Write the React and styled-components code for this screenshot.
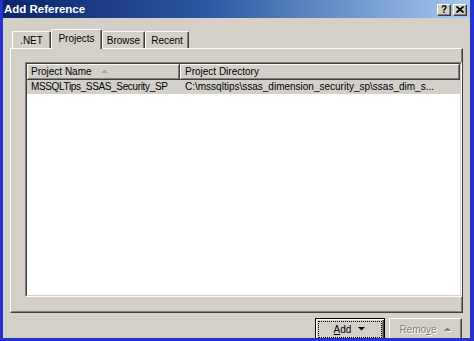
import React from "react";
import styled, { createGlobalStyle } from "styled-components";

const Global = createGlobalStyle`
  html, body { margin: 0; padding: 0; background: #ffffff; }
  * { box-sizing: border-box; }
`;

const Window = styled.div`
  width: 474px;
  height: 341px;
  border-style: solid;
  border-color: #2433cc;
  border-width: 0 4px 3px 3px;
  background: #d4d0c8;
  overflow: hidden;
  display: flex;
  flex-direction: column;
  font-family: "Liberation Sans", Arial, sans-serif;
  font-size: 10px;
  color: #000;
`;

const TitleBar = styled.div`
  flex: none;
  height: 18px;
  display: flex;
  align-items: center;
  justify-content: space-between;
  padding: 0 3px 0 1px;
  background: linear-gradient(to right, #0a246a 0%, #2f5aa4 45%, #a6caf0 100%);
  color: #fff;
  font-weight: bold;
  font-size: 11.5px;
`;

const CaptionButtons = styled.div`
  display: flex;
  gap: 2px;
  padding-top: 1px;
`;

const CaptionButton = styled.div`
  width: 14px;
  height: 12px;
  display: flex;
  align-items: center;
  justify-content: center;
  background: #d4d0c8;
  border: 1px solid;
  border-color: #fff #404040 #404040 #fff;
  box-shadow: inset -1px -1px #808080;
  color: #000;
  font-weight: bold;
  font-size: 10px;
  line-height: 1;
`;

const Body = styled.div`
  flex: 1;
  display: flex;
  flex-direction: column;
  padding: 11px 7px 0;
  min-height: 0;
`;

const TabStrip = styled.div`
  flex: none;
  height: 19px;
  display: flex;
  align-items: flex-end;
  padding-left: 2px;
  position: relative;
  z-index: 1;
`;

const Tab = styled.div`
  width: ${(p) => p.$width}px;
  height: ${(p) => (p.$active ? 20 : 17)}px;
  margin-bottom: ${(p) => (p.$active ? -1 : 0)}px;
  padding-bottom: ${(p) => (p.$active ? 2 : 0)}px;
  display: flex;
  align-items: center;
  justify-content: center;
  background: #d4d0c8;
  border-top: 1px solid #fff;
  border-left: 1px solid #fff;
  border-right: 1px solid #404040;
  border-radius: 2px 2px 0 0;
  box-shadow: inset -1px 0 #808080;
  white-space: nowrap;
`;

const Panel = styled.div`
  flex: none;
  height: 265px;
  display: flex;
  padding: 13px 15px 15px 14px;
  border-top: 1px solid #fff;
  border-left: 1px solid #fff;
  border-right: 1px solid #404040;
  border-bottom: 1px solid #404040;
  box-shadow: inset -1px -1px #808080;
`;

const ListOuter = styled.div`
  flex: 1;
  display: flex;
  border: 1px solid;
  border-color: #808080 #fff #fff #808080;
`;

const ListInner = styled.div`
  flex: 1;
  display: flex;
  flex-direction: column;
  background: #fff;
  border: 1px solid;
  border-color: #404040 #d4d0c8 #d4d0c8 #404040;
  overflow: hidden;
`;

const HeaderRow = styled.div`
  flex: none;
  display: flex;
  height: 16px;
`;

const HeaderCell = styled.div`
  width: ${(p) => p.$width}px;
  flex: none;
  display: flex;
  align-items: center;
  gap: 9px;
  padding-left: ${(p) => p.$pad}px;
  background: #d4d0c8;
  border-right: 1px solid #404040;
  border-bottom: 1px solid #404040;
  box-shadow: inset 1px 1px #fff, inset -1px -1px #808080;
  white-space: nowrap;
  overflow: hidden;
`;

const Row = styled.div`
  flex: none;
  display: flex;
  height: 14px;
  background: ${(p) => (p.$selected ? "#d3d0ca" : "transparent")};
`;

const Cell = styled.div`
  width: ${(p) => p.$width}px;
  flex: none;
  padding-left: ${(p) => p.$pad}px;
  line-height: 14px;
  white-space: nowrap;
  overflow: hidden;
  letter-spacing: ${(p) => p.$tight || 0}px;
`;

const ButtonRow = styled.div`
  flex: none;
  display: flex;
  justify-content: flex-end;
  gap: 4px;
  margin-top: 5px;
  padding-right: 1px;
`;

const Button = styled.div`
  width: ${(p) => p.$width}px;
  height: 23px;
  flex: none;
  display: flex;
  align-items: stretch;
  background: #d4d0c8;
  border: 1px solid;
  border-color: ${(p) => (p.$default ? "#000" : "#fff #404040 #404040 #fff")};
  box-shadow: ${(p) =>
    p.$default
      ? "inset 1px 1px #fff, inset -1px -1px #404040, inset -2px -2px #808080"
      : "inset -1px -1px #808080"};
  color: ${(p) => (p.$disabled ? "#808080" : "#000")};
  text-shadow: ${(p) => (p.$disabled ? "1px 1px #fff" : "none")};
`;

const FocusRing = styled.div`
  flex: 1;
  margin: ${(p) => (p.$show ? "2px" : "3px")};
  display: flex;
  align-items: center;
  justify-content: center;
  gap: 7px;
  border: 1px dotted ${(p) => (p.$show ? "#000" : "transparent")};
  padding-bottom: 1px;
`;

const Mnemonic = styled.span`
  text-decoration: underline;
  text-underline-offset: 1px;
`;

const Triangle = ({ up, color = "#000", shadow }) => (
  <svg width="8" height="5" viewBox="0 0 8 5" style={{ display: "block" }}>
    {shadow && (
      <polygon points={up ? "2,5 5,2 8,5" : "2,1 8,1 5,4"} fill={shadow} />
    )}
    <polygon points={up ? "0,4 3.5,0.5 7,4" : "0,0 7,0 3.5,3.5"} fill={color} />
  </svg>
);

const CloseGlyph = () => (
  <svg width="8" height="7" viewBox="0 0 8 7" style={{ display: "block" }}>
    <path d="M0.5 0.5 L7.5 6.5 M7.5 0.5 L0.5 6.5" stroke="#000" strokeWidth="1.8" />
  </svg>
);

export default function App() {
  return (
    <>
      <Global />
      <Window>
        <TitleBar>
          <span>Add Reference</span>
          <CaptionButtons>
            <CaptionButton>?</CaptionButton>
            <CaptionButton>
              <CloseGlyph />
            </CaptionButton>
          </CaptionButtons>
        </TitleBar>
        <Body>
          <TabStrip>
            <Tab $width={39}>.NET</Tab>
            <Tab $width={51} $active>
              Projects
            </Tab>
            <Tab $width={43}>Browse</Tab>
            <Tab $width={44}>Recent</Tab>
          </TabStrip>
          <Panel>
            <ListOuter>
              <ListInner>
                <HeaderRow>
                  <HeaderCell $width={153} $pad={4}>
                    <span>Project Name</span>
                    <Triangle up color="#a8a59e" />
                  </HeaderCell>
                  <HeaderCell $width={280} $pad={5}>
                    Project Directory
                  </HeaderCell>
                </HeaderRow>
                <Row $selected>
                  <Cell $width={153} $pad={4} $tight={-0.35}>
                    MSSQLTips_SSAS_Security_SP
                  </Cell>
                  <Cell $width={266} $pad={5}>
                    C:\mssqltips\ssas_dimension_security_sp\ssas_dim_s...
                  </Cell>
                </Row>
              </ListInner>
            </ListOuter>
          </Panel>
          <ButtonRow>
            <Button $width={70} $default>
              <FocusRing $show>
                <span>
                  <Mnemonic>A</Mnemonic>dd
                </span>
                <Triangle />
              </FocusRing>
            </Button>
            <Button $width={73} $disabled>
              <FocusRing>
                <span>
                  Remo<Mnemonic>v</Mnemonic>e
                </span>
                <Triangle up color="#808080" shadow="#fff" />
              </FocusRing>
            </Button>
          </ButtonRow>
        </Body>
      </Window>
    </>
  );
}
